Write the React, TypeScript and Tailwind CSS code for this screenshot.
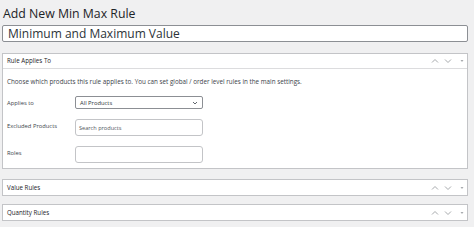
import React from "react";

const font = { fontFamily: '"Open Sans", "Noto Sans", sans-serif' };

function Icons() {
  return (
    <div className="flex items-center gap-[5px] text-[#a7aaad]">
      <svg width="8" height="6" viewBox="0 0 8 6" fill="none" stroke="currentColor" strokeWidth="1">
        <path d="M1 4.5 L4 1.5 L7 4.5" />
      </svg>
      <svg width="8" height="6" viewBox="0 0 8 6" fill="none" stroke="currentColor" strokeWidth="1">
        <path d="M1 1.5 L4 4.5 L7 1.5" />
      </svg>
      <svg width="8" height="6" viewBox="0 0 8 6" className="ml-[1px]" fill="currentColor">
        <path d="M2.5 2 L5.5 2 L4 4 Z" />
      </svg>
    </div>
  );
}

function PanelHeader({ title, border }: { title: string; border?: boolean }) {
  return (
    <div
      className={`flex h-[15px] items-center justify-between pl-[4px] pr-[1px] ${
        border ? "border-b border-[#dcdcde]" : ""
      }`}
    >
      <span className="text-[6.2px] font-medium text-[#1d2327]">{title}</span>
      <Icons />
    </div>
  );
}

export default function App() {
  return (
    <div className="h-[227px] w-[474px] overflow-hidden bg-[#f0f0f1] pl-[2px] pr-[6px]" style={font}>
      <div className="flex h-[25px] items-center pl-[1px] pt-[3px] text-[12.3px] text-[#1d2327]">
        Add New Min Max Rule
      </div>
      <div className="flex h-[17px] items-center rounded-[2px] border border-[#8c8f94] bg-white pl-[5px] text-[12px] text-[#2c3338]">
        Minimum and Maximum Value
      </div>

      <div className="mt-[11px] border border-[#c3c4c7] bg-white">
        <PanelHeader title="Rule Applies To" border />
        <div className="px-[4px] pb-[5px]">
          <div className="pt-[8px] text-[6.3px] text-[#3c434a]">
            Choose which products this rule applies to. You can set global / order level rules in the main settings.
          </div>
          <div className="mt-[10px] flex items-center">
            <span className="w-[68px] text-[5.8px] text-[#3c434a]">Applies to</span>
            <div className="flex h-[13px] w-[128px] items-center justify-between rounded-[2px] border border-[#8c8f94] pl-[4px] pr-[4px] text-[5.8px] text-[#2c3338]">
              <span>All Products</span>
              <svg width="6" height="4" viewBox="0 0 6 4" fill="none" stroke="#50575e" strokeWidth="0.9">
                <path d="M1 1 L3 3 L5 1" />
              </svg>
            </div>
          </div>
          <div className="mt-[10px] flex items-start">
            <span className="w-[68px] pt-[3px] text-[5.8px] text-[#3c434a]">Excluded Products</span>
            <div className="flex h-[17px] w-[128px] items-center rounded-[3px] border border-[#c3c4c7] pl-[3px] text-[5.6px] text-[#50575e]">
              Search products
            </div>
          </div>
          <div className="mt-[10px] flex items-start">
            <span className="w-[68px] pt-[3px] text-[5.8px] text-[#3c434a]">Roles</span>
            <div className="h-[17px] w-[128px] rounded-[3px] border border-[#c3c4c7]" />
          </div>
        </div>
      </div>

      <div className="mt-[10px] border border-[#c3c4c7] bg-white">
        <PanelHeader title="Value Rules" />
      </div>
      <div className="mt-[8px] border border-[#c3c4c7] bg-white">
        <PanelHeader title="Quantity Rules" />
      </div>
    </div>
  );
}
